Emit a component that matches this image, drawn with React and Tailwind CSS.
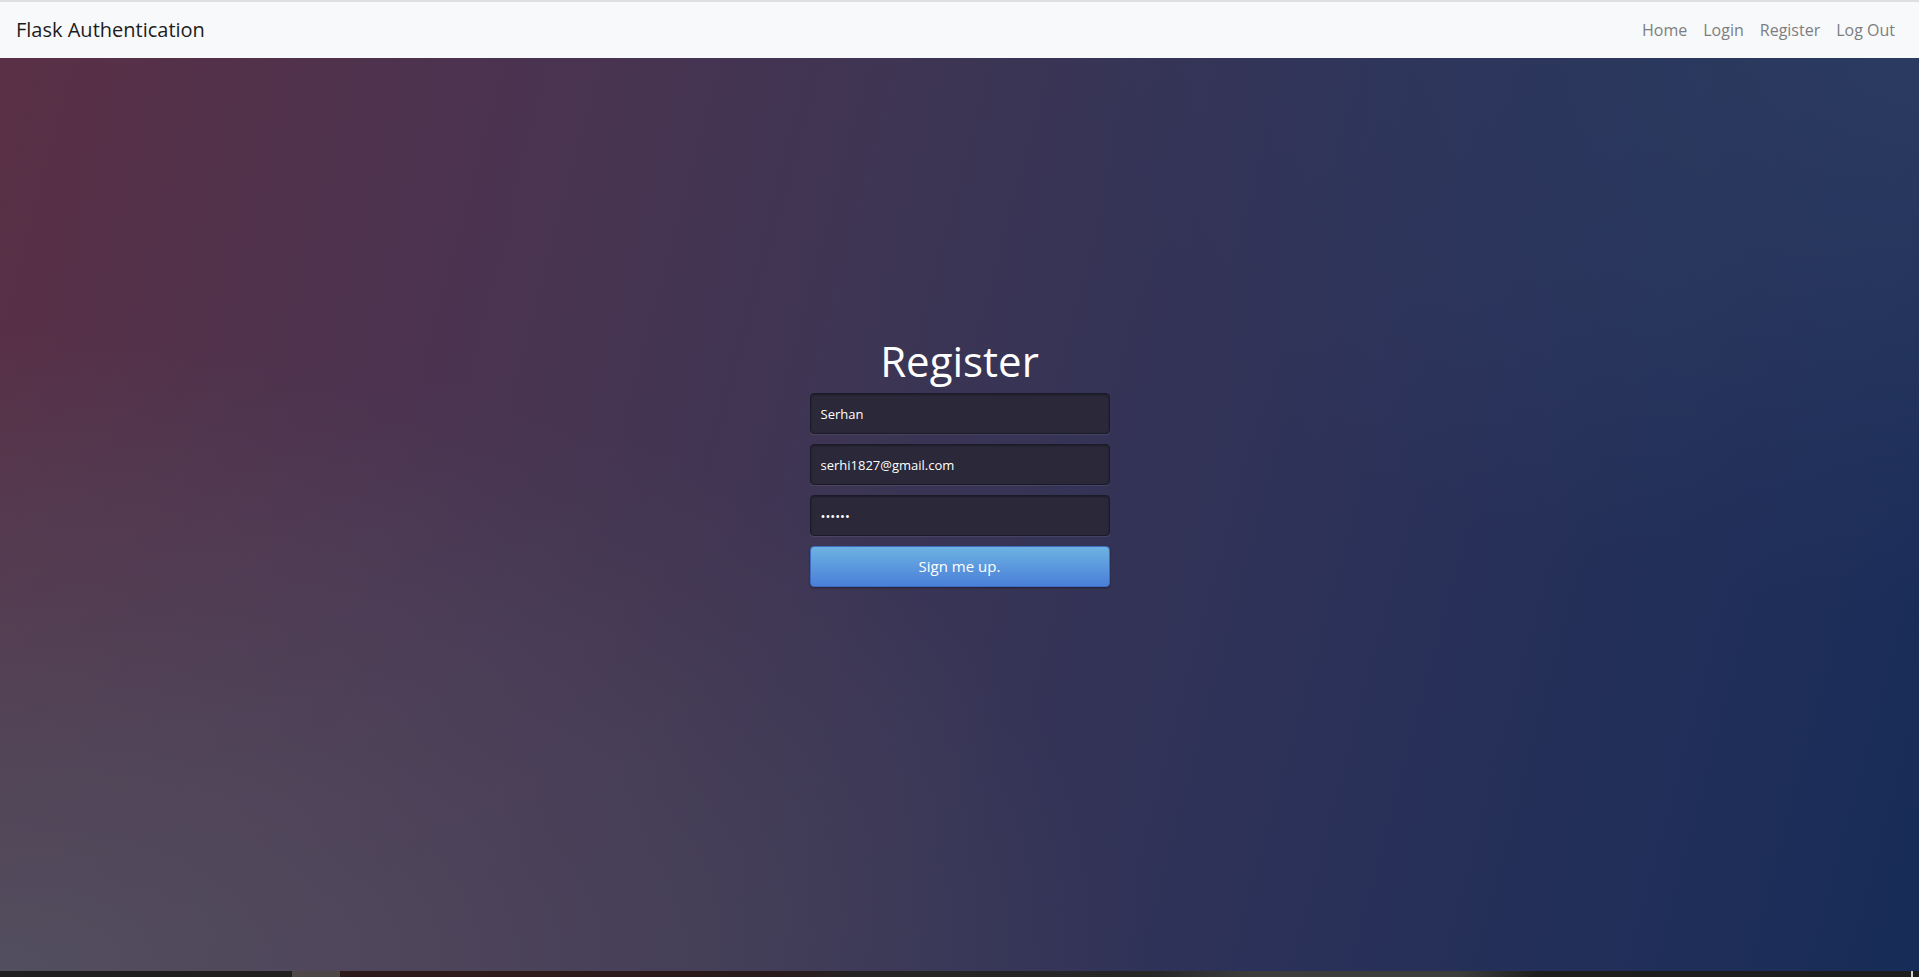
import { useState } from 'react'

const links = ['Home', 'Login', 'Register', 'Log Out']

export default function App() {
  const [name, setName] = useState('Serhan')
  const [email, setEmail] = useState('serhi1827@gmail.com')
  const [pass, setPass] = useState('123456')

  return (
    <div className="flex h-[977px] w-full flex-col overflow-hidden font-['Open_Sans',sans-serif]">
      <nav className="flex h-[58px] shrink-0 items-center justify-between border-t-2 border-[#dedfe0] bg-[#f8f9fa] px-4">
        <a className="text-[20px] leading-none text-[#1c1c1c]">Flask Authentication</a>
        <ul className="flex items-center">
          {links.map(l => (
            <li key={l} className="px-2 text-[16px] text-[#7d7e80]">{l}</li>
          ))}
        </ul>
      </nav>

      <main className="flex flex-1 flex-col items-center bg-[radial-gradient(ellipse_60%_70%_at_0%_100%,rgba(82,80,96,0.95),rgba(82,80,96,0)),radial-gradient(ellipse_45%_60%_at_100%_0%,rgba(48,64,100,0.7),rgba(48,64,100,0)),linear-gradient(105deg,#5a3046_0%,#4a3350_25%,#3c3554_45%,#2b3159_70%,#172c58_100%)] pt-[278px]">
        <h1 className="mb-2 text-[42px] leading-[49px] font-normal text-white">Register</h1>
        <form className="flex w-[300px] flex-col gap-[10px]" onSubmit={e => e.preventDefault()}>
          <Field value={name} onChange={setName} />
          <Field value={email} onChange={setEmail} />
          <Field value={pass} onChange={setPass} type="password" />
          <button className="h-[41px] rounded-[4px] border border-[#3d6cc0] bg-[linear-gradient(#6db2e2,#4a7fd9)] text-[15px] text-white shadow-[0_1px_2px_rgba(0,0,0,0.4)]">
            Sign me up.
          </button>
        </form>
      </main>

      <div className="h-[6px] shrink-0 bg-[linear-gradient(90deg,#1f1f1f_0px,#1f1f1f_292px,#4d4747_292px,#4d4747_340px,#2e1a1b_340px,#2b1a1b_780px,#242424_860px,#262626_1150px,#3c3c3c_1250px,#3c3c3c_1460px,#1d1d1d_1540px,#1d1d1d_1911px,#d0d0d0_1911px,#d0d0d0_1913px,#1d1d1d_1913px)]" />
    </div>
  )
}

function Field({ value, onChange, type = 'text' }) {
  return (
    <input
      type={type}
      value={value}
      onChange={e => onChange(e.target.value)}
      className="h-[41px] w-full rounded-[4px] border border-[#1b1a27] bg-[#2a2839] px-[10px] text-[13px] text-white shadow-[inset_0_1px_2px_rgba(0,0,0,0.3),0_1px_0_rgba(255,255,255,0.08)] outline-none"
    />
  )
}
